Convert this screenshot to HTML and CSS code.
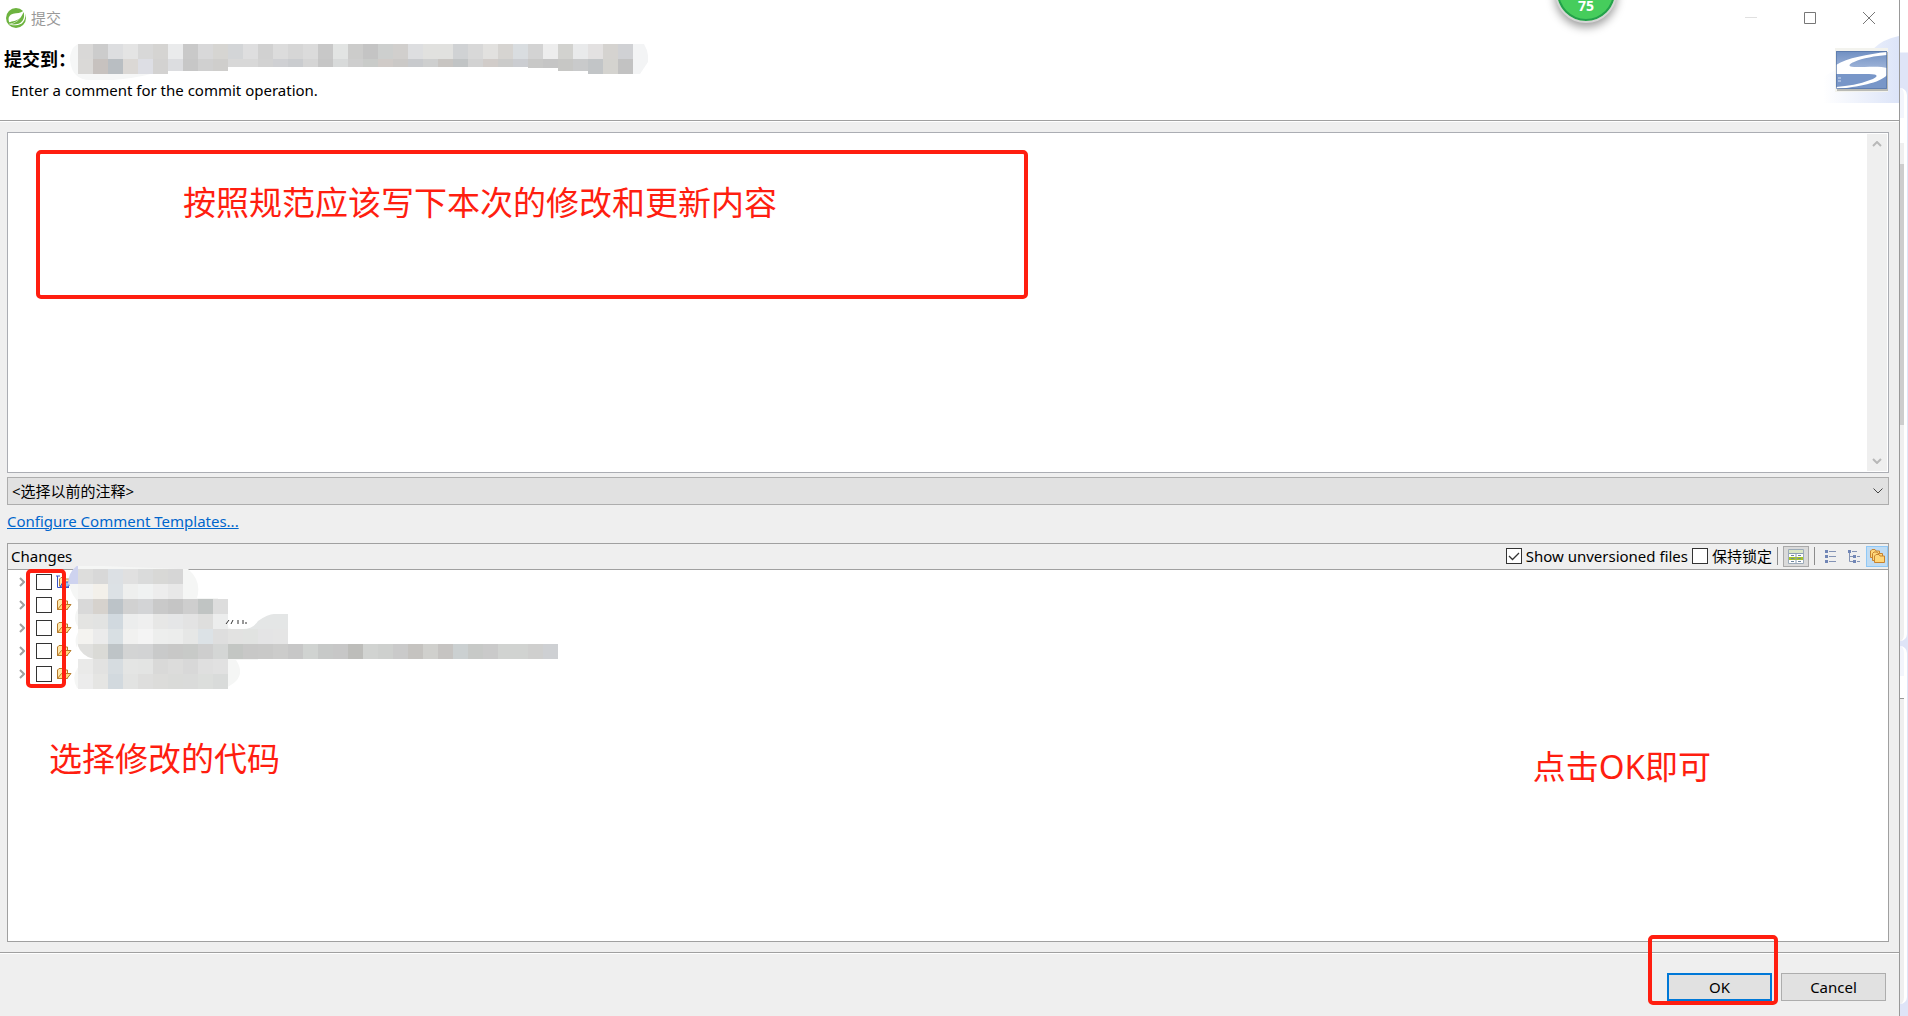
FILE: index.html
```html
<!DOCTYPE html>
<html lang="zh-CN">

<head>
    <meta charset="UTF-8" />
    <title>提交</title>
    <link rel="stylesheet" href="styles.css">
</head>

<body>
    <form class="dialog" onsubmit="return false">
        <div class="titlebar">
            <svg class="app-icon" viewBox="0 0 20 20">
                <circle cx="10" cy="10" r="10" fill="#6db33f" />
                <path d="M18.300 1.500C20.600 8 19.500 17 9.500 17.300C6 17.400 4 16.800 2.800 15.800C6 15.600 11 14 15 9.500C10 13.500 6.500 13 3.200 14.300C1 8.500 5 5.500 10 5.300C14 5.200 16.500 4.200 18.300 1.500Z" fill="#fff" />
                <path d="M17.600 4C19 9 17.500 14 12.500 15.700C8.500 16.800 5.500 16.400 3.800 15.900C9 15.500 14 13 17.600 4Z" fill="#6db33f" />
            </svg>
            <span class="title">提交</span>
            <div class="window-buttons">
                <button type="button" aria-label="Minimize" disabled><svg viewBox="0 0 12 12"><path d="M0 5.500H12" stroke="#e0e0e0" /></svg></button>
                <button type="button" aria-label="Maximize"><svg viewBox="0 0 12 12"><path d="M.5 .5H11.500V11.500H.5Z" stroke="#777" /></svg></button>
                <button type="button" aria-label="Close"><svg viewBox="0 0 12 12"><path d="M0 0L12 12M12 0L0 12" stroke="#777" /></svg></button>
            </div>
        </div>

        <div class="header">
            <div class="header-text">
                <h1>提交到：</h1>
                <p>Enter a comment for the commit operation.</p>
            </div>
            <svg class="mosaic mosaic-url" id="urlMosaic" width="578" height="38"></svg>
            <svg class="banner" viewBox="0 0 76 68">
                <defs>
                    <linearGradient id="fade"><stop offset="0" stop-color="#fff" /><stop offset="1" stop-color="#dce4f8" /></linearGradient>
                    <linearGradient id="shine" x2="0" y2="1"><stop offset="0" stop-color="#6f8fc2" /><stop offset=".5" stop-color="#a3b7da" /><stop offset="1" stop-color="#7391c6" /></linearGradient>
                </defs>
                <path d="M50 13Q60 3 76 0V67H0V41Z" fill="url(#fade)" />
                <g transform="translate(1 1)">
                    <path d="M11 11H64V55H11Z" fill="#f3f3ee" />
                    <path d="M13 15H64V54H13Z" fill="#93948f" opacity=".6" />
                    <path d="M12 14H63V52H12Z" fill="url(#shine)" />
                    <path d="M12 31H63V52H12Z" fill="#7896c8" />
                    <path d="M63 15C44 17 23 21 12 28V37H45C55 37 55 40 46 43C36 47 24 49 12 50V52C34 50 56 46 63 38V31C57 29 45 30 30 30C24 30 24 27 30 25C39 21 51 19 63 18Z" fill="#fff" />
                    <path d="M12.500 14.500H62.500V51.500H12.500Z" fill="none" stroke="#5573a5" opacity=".7" />
                    <path d="M14 41H17M14 44H17" stroke="#d4def1" />
                </g>
            </svg>
        </div>

        <div class="content">
            <div class="comment-box">
                <textarea aria-label="Comment"></textarea>
                <div class="scrollbar">
                    <svg viewBox="0 0 10 6"><path d="M1 5L5 1L9 5" /></svg>
                    <svg viewBox="0 0 10 6"><path d="M1 1L5 5L9 1" /></svg>
                </div>
                <div class="note-box note-box-comment"></div>
                <div class="note note-comment">按照规范应该写下本次的修改和更新内容</div>
            </div>

            <select class="history" aria-label="History">
                <option>&lt;选择以前的注释&gt;</option>
            </select>
            <a class="templates" href="#">Configure Comment Templates...</a>

            <div class="changes">
                <div class="changes-header">
                    <span>Changes</span>
                    <div class="toolbar">
                        <label><input type="checkbox" checked>Show unversioned files</label>
                        <label><input type="checkbox">保持锁定</label>
                        <i class="divider"></i>
                        <button type="button" class="tool tool-pressed" aria-label="Compare pane">
                            <svg viewBox="0 0 16 16">
                                <path d="M.5 1.500H15.500V15.500H.5Z" fill="#fff" stroke="#9cabb9" />
                                <path d="M1 2H15V5H1Z" fill="#dce8c4" />
                                <path d="M1 9H15V12H1Z" fill="#a5c528" />
                                <path d="M1 5.500H15M8 6V15" stroke="#8c9eb4" />
                                <path d="M3 7.500H6M10 7.500H13M3 10.500H6M10 10.500H13M3 13.500H6M10 13.500H13" stroke="#6f879e" />
                            </svg>
                        </button>
                        <i class="divider"></i>
                        <button type="button" class="tool" aria-label="Flat view">
                            <svg viewBox="0 0 16 16"><path d="M2 2H5V5H2ZM2 7H5V10H2ZM2 12H5V15H2Z" fill="#7186b6" /><path d="M6 3.500H13M6 8.500H13M6 13.500H13" stroke="#8393b5" /></svg>
                        </button>
                        <button type="button" class="tool" aria-label="Tree view">
                            <svg viewBox="0 0 16 16"><path d="M2 2H5V5H2ZM7 7H10V10H7ZM7 12H10V15H7Z" fill="#7186b6" /><path d="M6 3.500H11M3.500 5V13.500H7M3.500 8.500H7M11 8.500H14M11 13.500H14" fill="none" stroke="#8393b5" /></svg>
                        </button>
                        <button type="button" class="tool tool-selected" aria-label="Compressed folders">
                            <svg viewBox="0 0 16 16"><g fill="#ffd77a" stroke="#c78331"><path d="M1.500 9.500V3L3 1.500H6L7 3H10.500V9.500Z" /><path d="M3.500 12.500V5.500L5 4H8L9 5.500H13.500V12.500Z" /><path d="M5.500 14.500V8L7 6.500H10L11 8H15.500V14.500Z" /></g></svg>
                        </button>
                    </div>
                </div>

                <ul class="tree">
                    <li><svg class="arrow" viewBox="0 0 6 10"><path d="M1 1L5 5L1 9" /></svg><input type="checkbox" aria-label="Project"><svg class="folder" viewBox="0 0 16 14"><path d="M0 1H4M1.500 1V12.500H13" fill="none" stroke="#3853c5" /><path d="M3.500 11V4L5 2.500H8L9 4H13V11Z" fill="#ffe9ad" stroke="#b98538" /><path d="M4 12L7 7H16L12 12Z" fill="#8bc5f5" stroke="#3853c5" /></svg></li>
                    <li><svg class="arrow" viewBox="0 0 6 10"><path d="M1 1L5 5L1 9" /></svg><input type="checkbox" aria-label="Folder 1"><svg class="folder" viewBox="0 0 16 14"><use href="#openFolder" /></svg></li>
                    <li><svg class="arrow" viewBox="0 0 6 10"><path d="M1 1L5 5L1 9" /></svg><input type="checkbox" aria-label="Folder 2"><svg class="folder" viewBox="0 0 16 14"><use href="#openFolder" /></svg></li>
                    <li><svg class="arrow" viewBox="0 0 6 10"><path d="M1 1L5 5L1 9" /></svg><input type="checkbox" aria-label="Folder 3"><svg class="folder" viewBox="0 0 16 14"><use href="#openFolder" /></svg></li>
                    <li><svg class="arrow" viewBox="0 0 6 10"><path d="M1 1L5 5L1 9" /></svg><input type="checkbox" aria-label="Folder 4"><svg class="folder" viewBox="0 0 16 14">
                        <g id="openFolder" stroke="#b67b2c" stroke-linejoin="round"><path d="M1.500 11.500V3L3 1.500H6L7.500 3H11.500V11.500Z" fill="#ffe8ac" /><path d="M1.500 11.500L5.500 6.500H15L11 11.500Z" fill="#ffdb83" /></g>
                    </svg></li>
                </ul>

                <svg class="mosaic mosaic-tree" id="treeMosaic" width="510" height="124"></svg>
                <div class="note-box note-box-tree"></div>
                <div class="note note-tree">选择修改的代码</div>
                <div class="note note-ok">点击OK即可</div>
            </div>
        </div>

        <div class="footer">
            <button type="submit" class="btn btn-default">OK</button>
            <button type="button" class="btn">Cancel</button>
            <div class="note-box note-box-ok"></div>
        </div>
    </form>

    <!-- window behind the dialog -->
    <div class="backdrop">
        <div class="panel panel-top"><div class="thumb"></div></div>
        <div class="panel panel-bottom"></div>
    </div>

    <div class="speed-ball">75</div>

    <script src="script.js"></script>
</body>

</html>
```
FILE: styles.css
```css
* {
    box-sizing: border-box;
}

body {
    margin: 0;
    height: 100vh;
    display: flex;
    position: relative;
    overflow: hidden;
    background: #dfe4f7;
    color: #000;
    font-family: "Noto Sans", "Noto Sans CJK SC", sans-serif;
    font-size: 15px;
    line-height: 20px;
}

button,
select,
textarea {
    font: inherit;
    color: inherit;
}

.dialog {
    flex: 1;
    min-width: 0;
    display: flex;
    flex-direction: column;
    background: #efefef;
    border-right: 1px solid #999;
}

.titlebar {
    height: 36px;
    display: flex;
    align-items: center;
    gap: 5px;
    padding: 0 1px 0 6px;
    background: #fff;
}

.app-icon {
    width: 20px;
    height: 20px;
}

.title {
    color: #999;
}

.window-buttons {
    display: flex;
    margin-left: auto;
}

.window-buttons button {
    width: 59px;
    height: 36px;
    padding: 0;
    border: none;
    background: none;
}

.window-buttons svg {
    width: 12px;
    height: 12px;
    fill: none;
}

.header {
    position: relative;
    display: flex;
    justify-content: space-between;
    height: 85px;
    background: #fff;
    border-bottom: 1px solid #a0a0a0;
}

.header-text {
    padding: 12px 0 0 4px;
}

.header h1 {
    margin: 0;
    font-size: 18px;
    line-height: 22px;
}

.header p {
    margin: 10px 0 0 7px;
}

.banner {
    width: 76px;
    height: 68px;
}

.mosaic {
    position: absolute;
}

.mosaic-url {
    left: 70px;
    top: 6px;
}

.content {
    flex: 1;
    display: flex;
    flex-direction: column;
    padding: 10px 10px 10px 7px;
    border-top: 1px solid #fff;
    border-bottom: 1px solid #a0a0a0;
}

.comment-box {
    flex: 339;
    position: relative;
    display: flex;
    padding: 1px;
    background: #fff;
    border: 1px solid #abadb3;
}

.comment-box textarea {
    flex: 1;
    border: none;
    outline: none;
    resize: none;
    padding: 4px;
}

.scrollbar {
    width: 20px;
    display: flex;
    flex-direction: column;
    justify-content: space-between;
    align-items: center;
    padding: 7px 0;
    background: #efefef;
}

.scrollbar svg {
    width: 10px;
    height: 6px;
    fill: none;
    stroke: #b8b8b8;
    stroke-width: 2;
}

.history {
    appearance: none;
    height: 28px;
    margin-top: 4px;
    padding: 0 4px;
    border: 1px solid #adadad;
    border-radius: 0;
    background: #e1e1e1 url("data:image/svg+xml,%3Csvg xmlns='http://www.w3.org/2000/svg' width='10' height='6'%3E%3Cpath d='M.5 .5L5 5L9.500 .5' fill='none' stroke='%23444'/%3E%3C/svg%3E") no-repeat right 5px center;
}

.templates {
    align-self: flex-start;
    margin: 6px 0 12px;
    color: #0066cc;
}

.changes {
    flex: 400;
    position: relative;
    background: #fff;
    border: 1px solid #a0a0a0;
}

.changes-header {
    height: 26px;
    display: flex;
    justify-content: space-between;
    align-items: center;
    padding-left: 3px;
    background: #efefef;
    border-bottom: 1px solid #a0a0a0;
}

.toolbar {
    display: flex;
    align-items: center;
    gap: 1px;
}

.toolbar label {
    display: flex;
    align-items: center;
    gap: 4px;
    margin-left: 3px;
}

input[type="checkbox"] {
    appearance: none;
    width: 16px;
    height: 16px;
    margin: 0;
    border: 1px solid #333;
    background: #fff;
}

input[type="checkbox"]:checked {
    background: #fff url("data:image/svg+xml,%3Csvg xmlns='http://www.w3.org/2000/svg' width='14' height='14'%3E%3Cpath d='M2 7L5.500 10.500L12 4' fill='none' stroke='%23333' stroke-width='1.300'/%3E%3C/svg%3E") center no-repeat;
}

.divider {
    width: 1px;
    height: 18px;
    margin: 0 4px;
    background: #8c8c8c;
}

.tool {
    width: 22px;
    height: 21px;
    display: flex;
    align-items: center;
    justify-content: center;
    padding: 0;
    border: 1px solid transparent;
    background: none;
}

.tool svg {
    width: 16px;
    height: 16px;
    flex: none;
}

.tool-pressed {
    width: 26px;
    background: #dadada;
    border-color: #aaa;
}

.tool-selected {
    background: #c0dcf3;
    border-color: #90c8f6;
}

.tree {
    margin: 0;
    padding: 1px 0 0 11px;
    list-style: none;
}

.tree li {
    display: flex;
    align-items: center;
    height: 23px;
}

.arrow {
    width: 6px;
    height: 10px;
    margin-right: 11px;
    fill: none;
    stroke: #a0a0a0;
    stroke-width: 2;
}

.folder {
    width: 16px;
    height: 14px;
    margin-left: 4px;
}

.mosaic-tree {
    left: 60px;
    top: 22px;
}

.footer {
    position: relative;
    height: 63px;
    display: flex;
    justify-content: flex-end;
    gap: 9px;
    padding: 19px 13px 0 0;
    border-top: 1px solid #fff;
}

.btn {
    width: 105px;
    height: 28px;
    padding: 0;
    border: 1px solid #adadad;
    background: #e1e1e1;
}

.btn-default {
    border: 2px solid #0078d7;
}

/* red annotations */
.note {
    position: absolute;
    color: #ff1e10;
    font-size: 33px;
    line-height: 44px;
    white-space: nowrap;
    pointer-events: none;
}

.note-box {
    position: absolute;
    border: 4px solid #ff1e10;
    border-radius: 5px;
    pointer-events: none;
}

.note-box-comment {
    left: 28px;
    top: 17px;
    width: 992px;
    height: 149px;
}

.note-comment {
    left: 175px;
    top: 48px;
}

.note-box-tree {
    left: 18px;
    top: 25px;
    width: 40px;
    height: 119px;
}

.note-tree {
    left: 41px;
    top: 193px;
}

.note-ok {
    right: 177px;
    top: 201px;
}

.note-box-ok {
    right: 121px;
    top: -19px;
    width: 130px;
    height: 70px;
}

.backdrop {
    width: 8px;
    display: flex;
    flex-direction: column;
    gap: 5px;
    padding: 88px 1px 12px 0;
    background: linear-gradient(#fff 52px, #dfe4f7 53px);
}

.panel {
    border-right: 3px solid #fff;
    border-radius: 0 8px 8px 0;
    background: #efefef;
}

.panel-top {
    display: flow-root;
    flex: 552;
    background: linear-gradient(#f3f5fc 30px, #fff 30px, #fff 55px, #efefef 55px);
}

.thumb {
    height: 261px;
    margin-top: 76px;
    background: #cdcdcd;
}

.panel-bottom {
    flex: 358;
    background: linear-gradient(#f3f5fc 30px, #fff 30px, #fff 52px, #999 52px, #999 53px, #efefef 53px);
}

.speed-ball {
    position: absolute;
    right: 291px;
    top: -39px;
    width: 62px;
    height: 62px;
    padding-top: 33px;
    border: 2px solid #d5d5d5;
    border-radius: 50%;
    background: #46cd5c;
    box-shadow: inset 0 0 0 2px #23a04b, 0 4px 10px rgba(0, 0, 0, 0.4);
    color: #fff;
    font-size: 14px;
    font-weight: bold;
    line-height: 20px;
    text-align: center;
}
```
FILE: script.js
```
const CELL = 15;

function addShape(svg, name, attrs) {
    const el = document.createElementNS('http://www.w3.org/2000/svg', name);
    Object.keys(attrs).forEach(key => el.setAttribute(key, attrs[key]));
    svg.appendChild(el);
}

// each row: x of the first cell, y, height, list of colours
function drawMosaic(svg, rows) {
    rows.forEach(([x, y, height, colors]) => {
        colors.split(' ').forEach((color, i) => {
            addShape(svg, 'rect', { x: x + i * CELL, y: y, width: CELL, height: height, fill: '#' + color });
        });
    });
}

const urlSvg = document.getElementById('urlMosaic');
addShape(urlSvg, 'path', { d: 'M8 2Q0 6 0 18Q2 38 20 38Q50 40 85 31V2Z', fill: '#f6f7f7' });
addShape(urlSvg, 'path', { d: 'M560 2H574Q579 10 578 20L570 32H560Z', fill: '#f3f4f5' });
drawMosaic(urlSvg, [
    [8, 2, 15, 'd9d8d7 cccccc dddee0 e4e4e4 d8d8d8 d5d4d2 eaebec c9c9c9 d8d8d9 d6d5d2 d3d5d7 dededf d1d1d1 dcdcdc d6d6d6 dbdbdb c8c8c8 e2e4e3 cccccb c4c4c4 cdcfce d1cfcd dddee0 e1e1df e1e1df d0d2d4 d8d8d8 e2e1df d6d4d1 d9dde0 d3d3d3 ededed d2d2cf e9eaeb e3e1e1 d5d3d0 d0d1d4'],
    [8, 17, 15, 'dad9d7 c7c2bf b9bec2 dbd8d5 dddee4 d3d2d1'],
    [98, 17, 12, 'dcdde0 c7c7c7 d0d0d0 cfcecc'],
    [158, 17, 8, 'd8d8d8 d8d8d8 d2d2d2 cfd0d3 cacccf d5d5d5 c6c6c6 d8dada cecece c9cbc9 d0cbc8 cbc9c7 c8cacd cecfcf c8c5c2 c1c4c5 d2d2d2 d1ccc9 cbcbca cbcdd1'],
    [458, 17, 9, 'c8c8c7 c5c5c5'],
    [488, 17, 12, 'c7c7c5 c9cacb'],
    [518, 17, 15, 'c2c5c7 d4d3cf c2c2c2']
]);

const treeSvg = document.getElementById('treeMosaic');
addShape(treeSvg, 'path', { d: 'M10 -1Q-5 10 5 29L12 39Q2 53 12 63Q0 80 20 93Q0 105 9 122H157Q180 112 168 94H190V79L150 55V32H129Q134 15 120 3H112Z', fill: '#f5f6f5' });
addShape(treeSvg, 'path', { d: 'M10 -1Q0 6 0 18H10Z', fill: '#ced3ef' });
drawMosaic(treeSvg, [
    [10, 3, 15, 'dddddc d8d8d8 dce0e4 e0e0e0 dadbdb d8d8d6 d6d6d6'],
    [10, 18, 15, 'f2f2f1 f3f0ea dce1e5 eeefee f0f2f2 ededed e8e8e8'],
    [10, 33, 15, 'd9d9d9 d6d2cd bcc3c8 d1d1d1 d3d4d6 c9c9c9 c5c5c5 cecece c0c4c3 dddddd'],
    [10, 48, 15, 'e4e4e2 e2e3e2 d1d9df eceded efefef e7e7e6 e5e6e7 e3e3e3 dededd eceded'],
    [10, 63, 15, 'f4f3f0 ebebeb d8dfe3 f1f1f0 f4f4f4 edeeed ecedec e6e7e6 dce2e6 dedede e2e2e1 e1e3e1 e4e4e5 e5e5e5'],
    [10, 78, 15, 'e0e0de dadad6 bec4c7 d3d4d4 d2d3d4 c9caca c8c8c7 c8cac8 cecece d4d6d5 c3c6c3 c8c8c7 c9c9c8 cccccb c7c7c7 d0d3d1 c7c9c8 c7c7c7 bdbdba d1d3d1 ced0ce cacaca c5c3c0 d0d0cd c6c4c2 cbd0d1 c7c9c7 cacaca d1d3d1 d1d3d1 cfcfce ced0d3'],
    [10, 93, 15, 'eaeae9 e2e2e1 d6dce0 e4e5e4 e3e4e3 d9d9d8 dcdcdb d8d8d8 dfdfdf e1e1e1'],
    [10, 108, 15, 'ececec e5e5e3 d2d9de e2e3e2 dededd dcdcda dadbd9 dadbda dcdedc d9dbda']
]);
addShape(treeSvg, 'path', { d: 'M175 63Q185 63 190 55Q200 48 206 48H220V63Z', fill: '#e4e6e6' });
// round off the lower left corner of the long row
addShape(treeSvg, 'path', { d: 'M9 78V93H26Q14 91 9 78Z', fill: '#fff' });
// text remains that the mosaic leaves uncovered
addShape(treeSvg, 'path', { d: 'M158 58L161 54M163 58L165 54M170 54V58M175 54V58M178 56V58', stroke: '#333', fill: 'none' });
```
